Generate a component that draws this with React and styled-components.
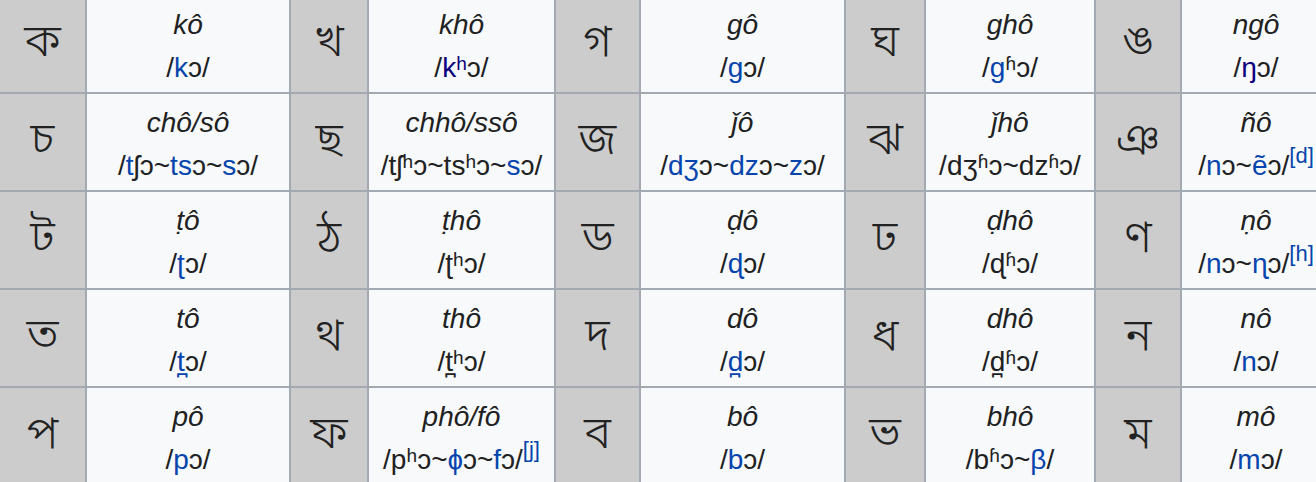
import styled, { createGlobalStyle } from 'styled-components'

const GlobalStyle = createGlobalStyle`
    html, body {
        margin: 0;
        padding: 0;
        background: #ffffff;
        overflow: hidden;
    }
`

const Page = styled.div`
    width: 1316px;
    height: 482px;
    overflow: hidden;
`

const Table = styled.table`
    border-collapse: collapse;
    table-layout: fixed;
    width: 1332px;
    margin: -6px 0 0 -2px;
    font-family: "Liberation Sans", "DejaVu Sans", sans-serif;
    color: #202122;
`

const Row = styled.tr`
    height: 98px;
`

const LetterCell = styled.td`
    background: #cccccc;
    border: 2px solid #a2a9b1;
    text-align: center;
    vertical-align: middle;
    font-family: "Noto Sans Bengali", "Lohit Bengali", "FreeSans", "Noto Sans", sans-serif;
    font-size: 46px;
    font-weight: 350;
    line-height: 1;
    padding: 2px 0 0;
    color: #222222;
`

const SoundCell = styled.td`
    background: #f8f9fa;
    border: 2px solid #a2a9b1;
    text-align: center;
    vertical-align: middle;
    font-size: 28px;
    line-height: 43px;
    padding: 4px 0 0;
    white-space: nowrap;
`

const Roman = styled.div`
    font-style: italic;
`

const Ipa = styled.div`
    font-family: "Liberation Sans", "DejaVu Sans", sans-serif;
`

const Link = styled.span`
    color: ${ ( { $visited } ) => $visited ? `#0b0080` : `#0645ad` };
`

const Ref = styled.sup`
    color: #0645ad;
    font-size: 22px;
    line-height: 1;
    vertical-align: 12px;
`

// ipa parts: strings are plain text, [text] is a link, [text, true] a visited link
const rows = [
    [
        { letter: `ক`, roman: `kô`, ipa: [ `/`, [ `k` ], `ɔ/` ] },
        { letter: `খ`, roman: `khô`, ipa: [ `/`, [ `kʰ`, true ], `ɔ/` ] },
        { letter: `গ`, roman: `gô`, ipa: [ `/`, [ `ɡ` ], `ɔ/` ] },
        { letter: `ঘ`, roman: `ghô`, ipa: [ `/`, [ `ɡ` ], `ʱɔ/` ] },
        { letter: `ঙ`, roman: `ngô`, ipa: [ `/`, [ `ŋ`, true ], `ɔ/` ] },
    ],
    [
        { letter: `চ`, roman: `chô/sô`, ipa: [ `/`, [ `t` ], `ʃɔ~`, [ `ts` ], `ɔ~`, [ `s` ], `ɔ/` ] },
        { letter: `ছ`, roman: `chhô/ssô`, ipa: [ `/tʃʰɔ~tsʰɔ~`, [ `s` ], `ɔ/` ] },
        { letter: `জ`, roman: `ǰô`, ipa: [ `/`, [ `dʒ` ], `ɔ~`, [ `dz` ], `ɔ~`, [ `z` ], `ɔ/` ] },
        { letter: `ঝ`, roman: `ǰhô`, ipa: [ `/dʒʱɔ~dzʱɔ/` ] },
        { letter: `ঞ`, roman: `ñô`, ipa: [ `/`, [ `n` ], `ɔ~`, [ `ẽ` ], `ɔ/` ], note: `d` },
    ],
    [
        { letter: `ট`, roman: `ṭô`, ipa: [ `/`, [ `ʈ` ], `ɔ/` ] },
        { letter: `ঠ`, roman: `ṭhô`, ipa: [ `/ʈʰɔ/` ] },
        { letter: `ড`, roman: `ḍô`, ipa: [ `/`, [ `ɖ` ], `ɔ/` ] },
        { letter: `ঢ`, roman: `ḍhô`, ipa: [ `/ɖʱɔ/` ] },
        { letter: `ণ`, roman: `ṇô`, ipa: [ `/`, [ `n` ], `ɔ~`, [ `ɳ` ], `ɔ/` ], note: `h` },
    ],
    [
        { letter: `ত`, roman: `tô`, ipa: [ `/`, [ `t̪` ], `ɔ/` ] },
        { letter: `থ`, roman: `thô`, ipa: [ `/t̪ʰɔ/` ] },
        { letter: `দ`, roman: `dô`, ipa: [ `/`, [ `d̪` ], `ɔ/` ] },
        { letter: `ধ`, roman: `dhô`, ipa: [ `/d̪ʱɔ/` ] },
        { letter: `ন`, roman: `nô`, ipa: [ `/`, [ `n` ], `ɔ/` ] },
    ],
    [
        { letter: `প`, roman: `pô`, ipa: [ `/`, [ `p` ], `ɔ/` ] },
        { letter: `ফ`, roman: `phô/fô`, ipa: [ `/pʰɔ~`, [ `ɸ` ], `ɔ~`, [ `f` ], `ɔ/` ], note: `j` },
        { letter: `ব`, roman: `bô`, ipa: [ `/`, [ `b` ], `ɔ/` ] },
        { letter: `ভ`, roman: `bhô`, ipa: [ `/bʱɔ~`, [ `β` ], `/` ] },
        { letter: `ম`, roman: `mô`, ipa: [ `/`, [ `m` ], `ɔ/` ] },
    ],
]

// widths between border centres, measured from the screenshot
const widths = [ 87, 204, 78, 187, 85, 205, 80, 170, 86, 150 ]

function IpaText( { parts, note } ) {
    return <Ipa>
        { parts.map( ( part, i ) => typeof part === `string`
            ? <span key={ i }>{ part }</span>
            : <Link key={ i } $visited={ part[1] }>{ part[0] }</Link> ) }
        { note && <Ref>[{ note }]</Ref> }
    </Ipa>
}

export default function App() {

    return <Page>
        <GlobalStyle />
        <Table>
            <colgroup>
                { widths.map( ( w, i ) => <col key={ i } style={ { width: w } } /> ) }
            </colgroup>
            <tbody>
                { rows.map( ( row, r ) => <Row key={ r }>
                    { row.map( cell => [
                        <LetterCell key={ `${ cell.letter }-l` }>{ cell.letter }</LetterCell>,
                        <SoundCell key={ `${ cell.letter }-s` }>
                            <Roman>{ cell.roman }</Roman>
                            <IpaText parts={ cell.ipa } note={ cell.note } />
                        </SoundCell>,
                    ] ) }
                </Row> ) }
            </tbody>
        </Table>
    </Page>

}
